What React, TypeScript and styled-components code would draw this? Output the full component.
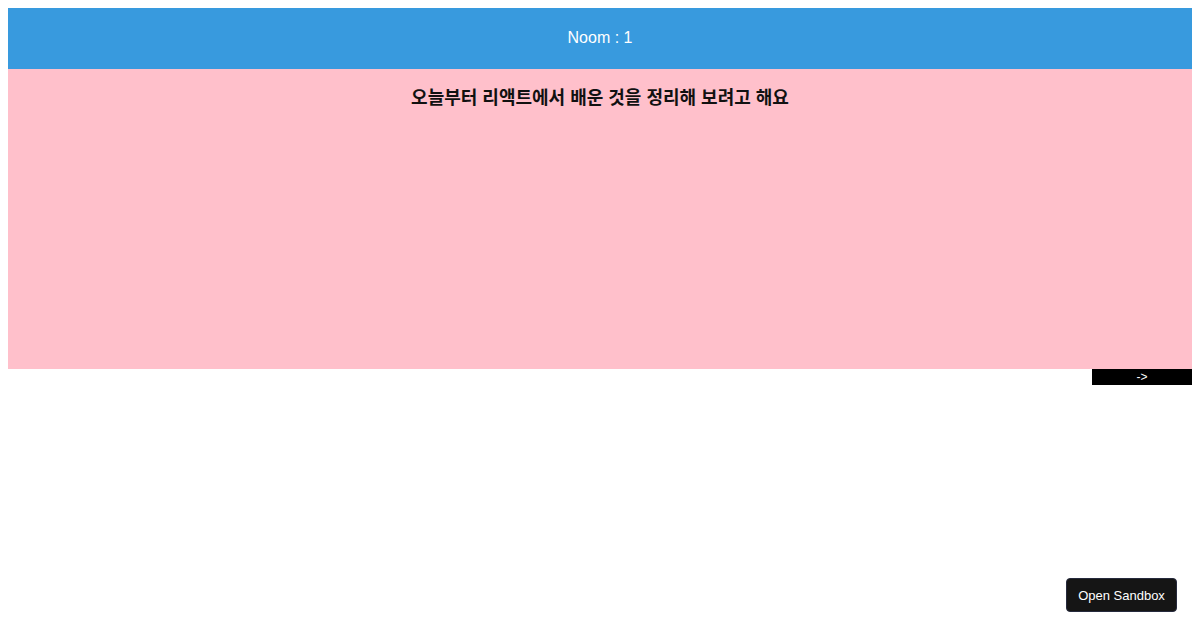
import styled, { createGlobalStyle } from 'styled-components'

const GlobalStyle = createGlobalStyle`
  body {
    margin: 8px;
    background: #ffffff;
    font-family: "Liberation Sans", "Noto Sans CJK KR", sans-serif;
  }
`

export default function App () {
  return (
    <>
      <GlobalStyle />
      <Slider>
        <Header>Noom : 1</Header>
        <Slide>
          <SlideTitle>오늘부터 리액트에서 배운 것을 정리해 보려고 해요</SlideTitle>
        </Slide>
        <Controls>
          <NextButton>-&gt;</NextButton>
        </Controls>
      </Slider>
      <SandboxButton>Open Sandbox</SandboxButton>
    </>
  )
}

const Slider = styled.div`
  display: flex;
  flex-direction: column;
`

const Header = styled.div`
  display: flex;
  align-items: center;
  justify-content: center;
  height: 61px;
  padding-bottom: 1px;
  box-sizing: border-box;
  background: #389ade;
  color: #ffffff;
  font-size: 16px;
`

const Slide = styled.div`
  height: 300px;
  background: pink;
  overflow: hidden;
`

const SlideTitle = styled.h3`
  margin: 18px 0 0;
  text-align: center;
  font-size: 18px;
  line-height: 22px;
  font-weight: bold;
  color: #111111;
`

const Controls = styled.div`
  display: flex;
  justify-content: flex-end;
`

const NextButton = styled.button`
  width: 100px;
  height: 16px;
  padding: 0;
  border: none;
  background: #000000;
  color: #ffffff;
  font-family: "Liberation Sans", sans-serif;
  font-size: 12px;
  line-height: 16px;
`

const SandboxButton = styled.button`
  position: fixed;
  right: 23px;
  bottom: 18px;
  width: 111px;
  height: 34px;
  padding: 0;
  border: 1px solid #262a3d;
  border-radius: 4px;
  background: #151515;
  color: #ffffff;
  font-family: "Liberation Sans", sans-serif;
  font-size: 13px;
`
